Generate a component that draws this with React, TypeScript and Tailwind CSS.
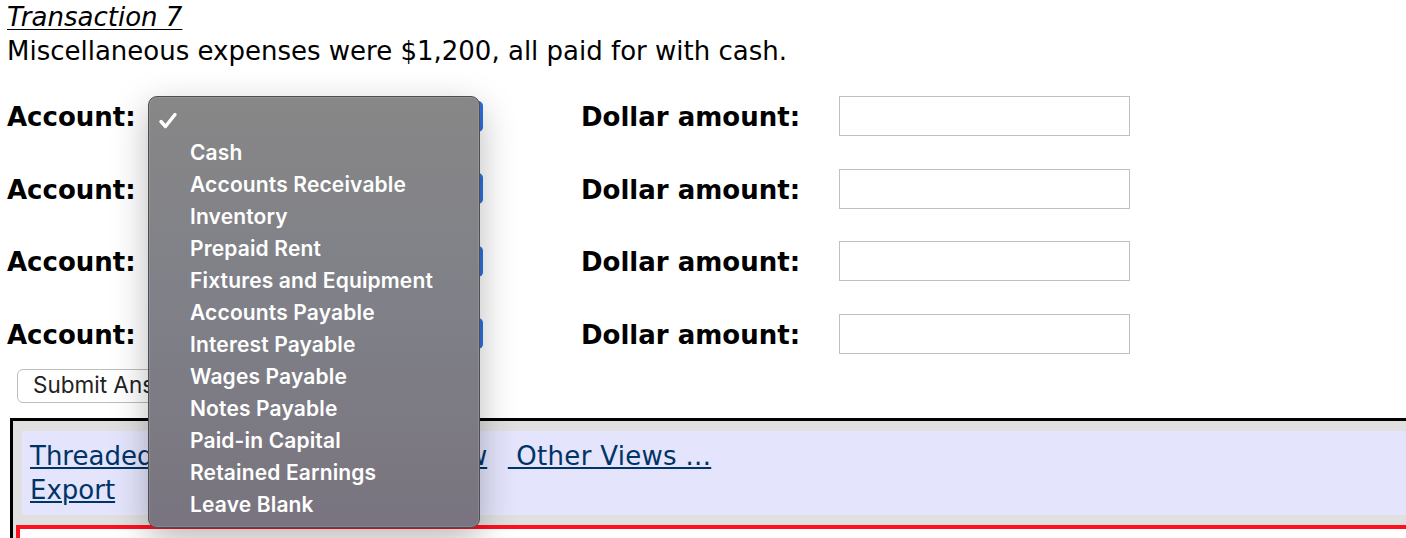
import React from 'react';

const accounts = [
  '',
  'Cash',
  'Accounts Receivable',
  'Inventory',
  'Prepaid Rent',
  'Fixtures and Equipment',
  'Accounts Payable',
  'Interest Payable',
  'Wages Payable',
  'Notes Payable',
  'Paid-in Capital',
  'Retained Earnings',
  'Leave Blank',
];

const verdana = "font-['DejaVu_Sans',Verdana,sans-serif]";

function AccountRow() {
  return (
    <div className="flex h-10 items-center">
      <div className={`w-[141px] pt-[2px] text-[26px] font-bold leading-none text-black ${verdana}`}>Account:</div>
      <div className="relative h-[31px] w-[335px] rounded-[5px] border border-[#b5b5b5] bg-white">
        <div className="absolute right-[-1px] top-[-1px] h-[31px] w-[20px] rounded-r-[5px] bg-[#2f6fe0]" />
      </div>
      <div className={`ml-[98px] w-[258px] pt-[2px] text-[26px] font-bold leading-none text-black ${verdana}`}>
        Dollar amount:
      </div>
      <input className="h-10 w-[291px] border border-[#c0c0c0] bg-white outline-none" />
    </div>
  );
}

function AccountMenu() {
  return (
    <div className="absolute left-[148px] top-[96px] z-10 h-[432px] w-[332px] rounded-[9px] border border-[#4d4d4f] bg-gradient-to-b from-[#878787] via-[#7f8088] to-[#79747f] py-2 shadow-[0_12px_36px_rgba(0,0,0,0.28),inset_0_0_0_1px_rgba(255,255,255,0.12)]">
      {accounts.map((name, i) => (
        <div
          key={i}
          className="relative flex h-8 items-center pl-[41px] font-['Inter','Noto_Sans',sans-serif] text-[21px] font-semibold tracking-[0.15px] text-white"
        >
          {i === 0 && (
            <svg className="absolute left-[9px] top-[6px] h-[20px] w-[20px]" viewBox="0 0 20 20" fill="none">
              <path d="M3 10.5l4.5 5L17 3.5" stroke="#ffffff" strokeWidth="3.4" strokeLinecap="round" strokeLinejoin="round" />
            </svg>
          )}
          {name}
        </div>
      ))}
    </div>
  );
}

export default function App() {
  return (
    <div className={`relative h-[538px] w-full overflow-hidden bg-white text-black ${verdana}`}>
      <div className="pl-[7px] text-[26px] leading-[34px]">
        <div className="italic underline decoration-1 underline-offset-[3px]">Transaction 7</div>
        <div>Miscellaneous expenses were $1,200, all paid for with cash.</div>
      </div>

      <div className="mt-[28px] flex flex-col gap-[32.5px] pl-[7px]">
        <AccountRow />
        <AccountRow />
        <AccountRow />
        <AccountRow />
      </div>

      <button className="ml-[17px] mt-[15px] h-[34px] rounded-[6px] border border-[#bdbdbd] bg-white px-[15px] font-['Inter',Arial,sans-serif] text-[22.5px] leading-none text-[#222]">
        Submit Answer
      </button>

      <div className="ml-[10px] mt-[15px] w-[1450px] border-[3px] border-black bg-[#e0e0e0]">
        <div className="ml-[9px] mt-[10px] h-[84px] bg-[#e4e4fc] px-2 pt-2 text-[26px] leading-[34px] text-[#003366]">
          <div className="whitespace-pre">
            <a href="#" className="underline">Threaded View</a>
            {'  '}
            <a href="#" className="underline">Chronological View</a>
            {'  '}
            <a href="#" className="ml-[4px] inline-block tracking-[0.3px] underline">{' Other Views ...'}</a>
          </div>
          <div>
            <a href="#" className="underline">Export</a>
          </div>
        </div>
        <div className="ml-[3px] mt-[10px] h-[60px] border-4 border-[#ff1020] bg-white" />
      </div>

      <AccountMenu />
    </div>
  );
}
